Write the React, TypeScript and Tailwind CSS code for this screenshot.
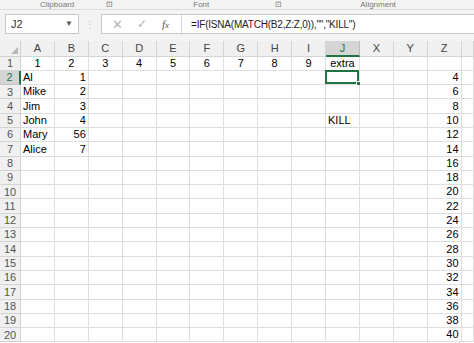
import React from "react";

const COLS = ["A", "B", "C", "D", "E", "F", "G", "H", "I", "J", "X", "Y", "Z", ""];
const NAMES = ["Al", "Mike", "Jim", "John", "Mary", "Alice"];
const NUMS = [1, 2, 3, 4, 56, 7];

const font = { fontFamily: '"Liberation Sans", Arial, sans-serif' };

function cellContent(r: number, c: number) {
    // r: 1-based row, c: column index
    if (r === 1) {
        if (c <= 8) return { text: String(c + 1), align: "justify-center" };
        if (c === 9) return { text: "extra", align: "justify-center" };
        return null;
    }
    if (r >= 2 && r <= 7) {
        if (c === 0) return { text: NAMES[r - 2], align: "justify-start" };
        if (c === 1) return { text: String(NUMS[r - 2]), align: "justify-end" };
    }
    if (r === 5 && c === 9) return { text: "KILL", align: "justify-start" };
    if (c === 12 && r >= 2) return { text: String(r * 2), align: "justify-end" };
    return null;
}

export default function App() {
    const rows = Array.from({ length: 20 }, (_, i) => i + 1);

    return (
        <div className="w-[474px] h-[343px] overflow-hidden bg-white text-black" style={font}>
            {/* ribbon group labels */}
            <div className="h-[10px] bg-[#f3f3f3] border-b border-[#dcdcdc] text-[8px] leading-[9px] text-[#777] flex items-start">
                <span className="ml-[40px]">Clipboard</span>
                <span className="ml-[32px]">⊡</span>
                <span className="ml-[80px]">Font</span>
                <span className="ml-[66px]">⊡</span>
                <span className="ml-[78px]">Alignment</span>
            </div>

            {/* formula bar */}
            <div className="h-[31px] bg-[#f3f3f3] flex items-start pt-[4px]">
                <div className="ml-[5px] w-[74px] h-[20px] bg-white border border-[#c8c8c8] flex items-center justify-between px-[5px] text-[11px] text-[#333]">
                    <span>J2</span>
                    <span className="text-[8px] text-[#555]">▼</span>
                </div>
                <div className="w-[22px] h-[20px] flex items-center justify-center text-[#c0c0c0] text-[10px]">⋮</div>
                <div className="flex-1 h-[20px] bg-white border border-[#c8c8c8] border-r-0 flex items-center text-[#333]">
                    <div className="w-[80px] flex items-center h-full border-r border-[#d4d4d4]">
                        <span className="ml-[10px] text-[13px] text-[#b4b4b4] leading-none">✕</span>
                        <span className="ml-[14px] text-[12px] text-[#b4b4b4] leading-none">✓</span>
                        <span className="ml-[15px] text-[11px] text-[#555] italic" style={{ fontFamily: '"Liberation Serif", serif' }}>
                            f<span className="text-[9px]">x</span>
                        </span>
                    </div>
                    <span className="ml-[9px] text-[10px] tracking-[-0.2px] text-[#222]">=IF(ISNA(MATCH(B2,Z:Z,0)),"","KILL")</span>
                </div>
            </div>

            {/* sheet grid */}
            <div className="grid grid-cols-[21px_repeat(13,33.9px)_1fr] grid-rows-[15.5px_repeat(20,14.3px)] text-[11px]">
                {/* header row */}
                <div className="bg-[#f0f0f0] border-r border-b border-[#cfcfcf] relative">
                    <div className="absolute right-[2px] bottom-[2px] w-0 h-0 border-l-[7px] border-l-transparent border-b-[7px] border-b-[#b7b7b7]" />
                </div>
                {COLS.map((c, i) =>
                    c === "J" ? (
                        <div key={i} className="bg-[#d5d5d5] border-r border-[#bdbdbd] border-b-2 border-b-[#217346] flex items-center justify-center text-[#217346]">
                            {c}
                        </div>
                    ) : (
                        <div key={i} className="bg-[#f0f0f0] border-r border-b border-[#d4d4d4] flex items-center justify-center text-[#444]">
                            {c}
                        </div>
                    )
                )}

                {rows.map((r) => (
                    <React.Fragment key={r}>
                        {r === 2 ? (
                            <div className="bg-[#d5d5d5] border-b border-[#c6c6c6] border-r-2 border-r-[#217346] flex items-center justify-center text-[#217346]">
                                {r}
                            </div>
                        ) : (
                            <div className="bg-[#f0f0f0] border-r border-b border-[#d4d4d4] flex items-center justify-center text-[#555]">
                                {r}
                            </div>
                        )}
                        {COLS.map((_, c) => {
                            const content = cellContent(r, c);
                            const selected = r === 2 && c === 9;
                            return (
                                <div
                                    key={c}
                                    className={`relative border-r border-b border-[#dedede] flex items-end px-[2px] leading-[13px] ${content ? content.align : ""}`}
                                >
                                    {content && <span>{content.text}</span>}
                                    {selected && (
                                        <div className="absolute -left-[1px] -top-[1px] right-0 bottom-0 border-2 border-[#217346]">
                                            <div className="absolute -right-[4px] -bottom-[4px] w-[5px] h-[5px] bg-[#217346] border border-white" />
                                        </div>
                                    )}
                                </div>
                            );
                        })}
                    </React.Fragment>
                ))}
            </div>
        </div>
    );
}
